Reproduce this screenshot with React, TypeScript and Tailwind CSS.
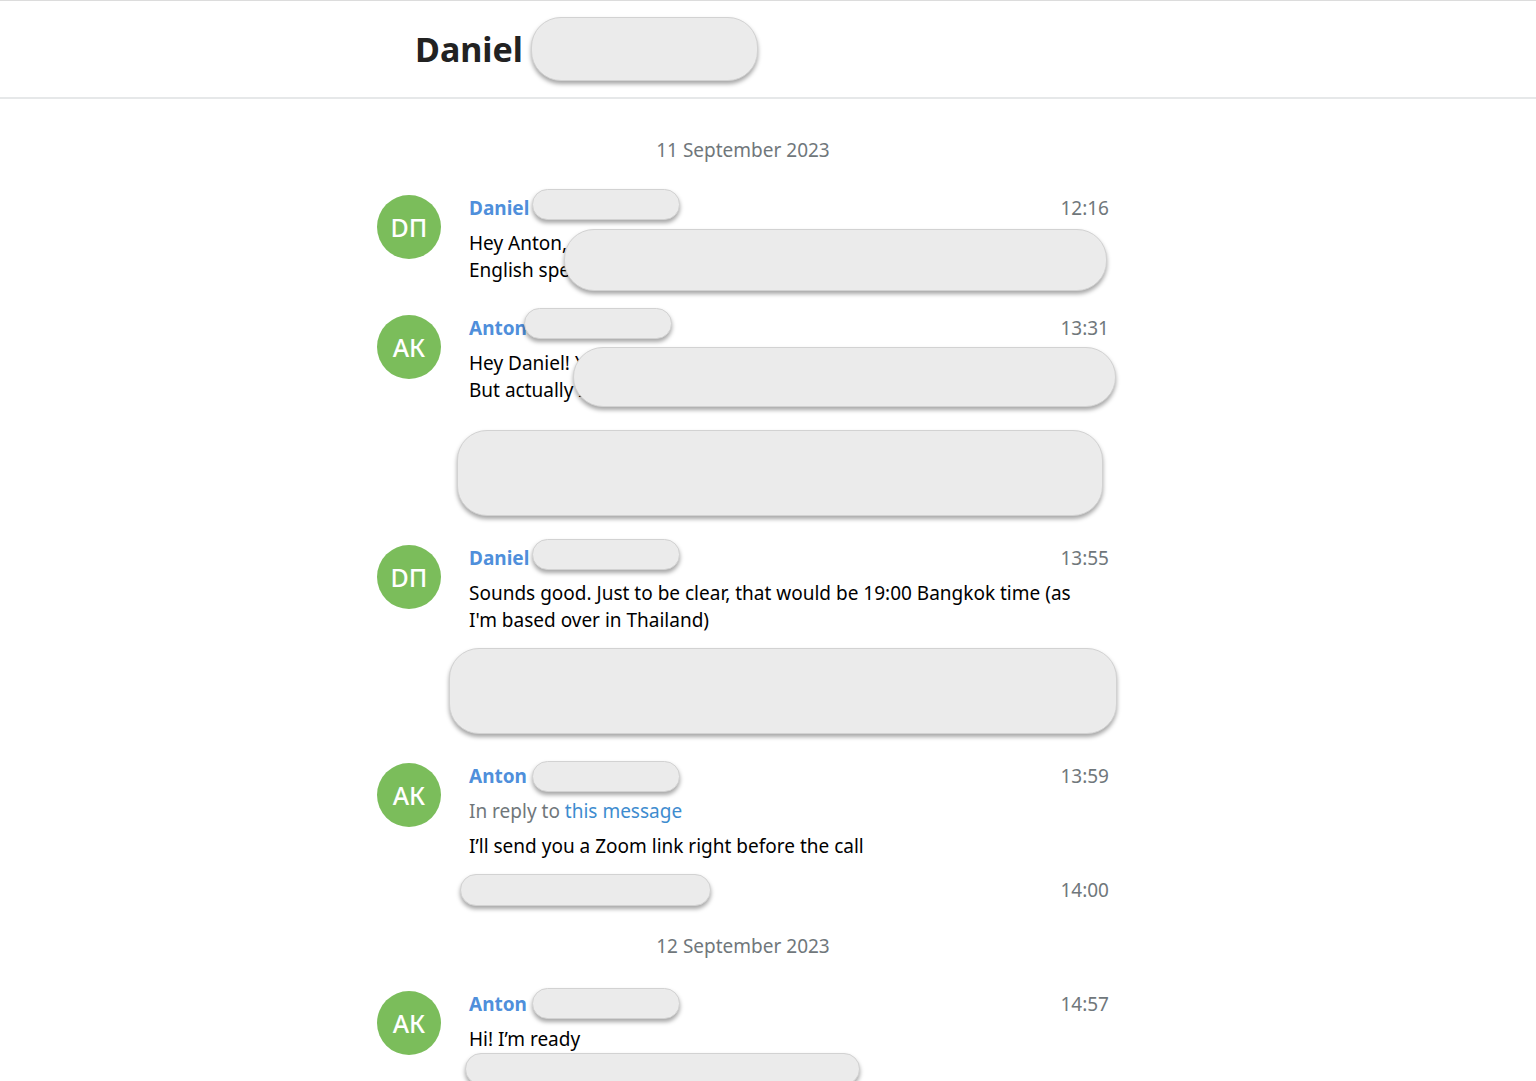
import type { ReactNode } from 'react';
import { clsx } from 'clsx';

type RedactedProps = {
  className: string;
};

// Grey pill that hides private parts of the conversation
const Redacted = ({ className }: RedactedProps) => (
  <span
    aria-hidden="true"
    className={clsx(
      'block border border-[#d2d2d2] bg-[#ebebeb] shadow-[0_3px_4px_rgba(0,0,0,0.35)]',
      className
    )}
  />
);

type MessageProps = {
  initials: string;
  name: string;
  time: string;
  nameBar: string;
  className?: string;
  children: ReactNode;
};

const Message = ({ initials, name, time, nameBar, className, children }: MessageProps) => (
  <article className={clsx('flex gap-7', className)}>
    <div className="flex size-16 shrink-0 items-center justify-center rounded-full bg-[#7bbd5b] text-[25px] font-medium text-white">
      {initials}
    </div>
    <div className="relative min-w-0 flex-1">
      <div className="mb-2 flex justify-between">
        <span className="font-bold text-[#4f8fdb]">{name}</span>
        <time className="text-[#70777b]">{time}</time>
      </div>
      {children}
      <Redacted className={clsx('absolute h-[31px] w-[148px] rounded-2xl', nameBar)} />
    </div>
  </article>
);

const DateDivider = ({ children }: { children: ReactNode }) => (
  <div className="mt-[27px] mb-[31px] text-center text-[#70777b]">{children}</div>
);

export default function App() {
  return (
    <div className="h-screen overflow-hidden border-t border-[#dcdcdc] bg-white font-['Noto_Sans',sans-serif] text-[19px] leading-[27px] text-black">
      <header className="border-b-2 border-[#e6e8e9] pr-[50px]">
        <div className="mx-auto flex h-24 max-w-[732px] items-center gap-2 pl-[38px]">
          <h1 className="text-[34px] leading-[44px] font-bold text-[#222]">Daniel</h1>
          <Redacted className="h-16 w-[227px] rounded-[30px]" />
        </div>
      </header>

      <main className="pr-[50px]">
        <div className="mx-auto max-w-[732px] pt-[11px]">
          <DateDivider>11 September 2023</DateDivider>

          <Message initials="DП" name="Daniel" time="12:16" nameBar="-top-1.5 left-[63px]">
            <p>Hey Anton,</p>
            <p>English spe</p>
            <Redacted className="absolute top-[34px] left-[95px] h-[62px] w-[543px] rounded-[30px]" />
          </Message>

          <Message initials="АК" name="Anton" time="13:31" nameBar="-top-[7px] left-[55px]" className="mt-[31px]">
            <p>Hey Daniel! Y</p>
            <p>But actually I</p>
            <Redacted className="absolute top-8 left-[104px] h-[60px] w-[543px] rounded-[30px]" />
          </Message>

          <Redacted className="mt-[26px] mr-1.5 ml-20 h-[86px] rounded-[30px]" />

          <Message initials="DП" name="Daniel" time="13:55" nameBar="-top-1.5 left-[63px]" className="mt-[29px]">
            <p className="pr-5">
              Sounds good. Just to be clear, that would be 19:00 Bangkok time (as
              I'm based over in Thailand)
            </p>
          </Message>

          <Redacted className="mt-3.5 -mr-2 ml-[72px] h-[86px] rounded-[30px]" />

          <Message initials="АК" name="Anton" time="13:59" nameBar="-top-0.5 left-[63px]" className="mt-[29px]">
            <p className="mb-2 text-[#70777b]">
              In reply to{' '}
              <a href="#message" className="text-[#3e8ccf]">
                this message
              </a>
            </p>
            <p>I’ll send you a Zoom link right before the call</p>
          </Message>

          <div className="mt-3.5 flex items-center justify-between pl-[83px]">
            <Redacted className="h-8 w-[251px] rounded-2xl" />
            <time className="text-[#70777b]">14:00</time>
          </div>

          <DateDivider>12 September 2023</DateDivider>

          <Message initials="АК" name="Anton" time="14:57" nameBar="-top-[3px] left-[63px]">
            <p>Hi! I’m ready</p>
            <Redacted className="-ml-1 h-8 w-[395px] rounded-2xl" />
          </Message>
        </div>
      </main>
    </div>
  );
}
